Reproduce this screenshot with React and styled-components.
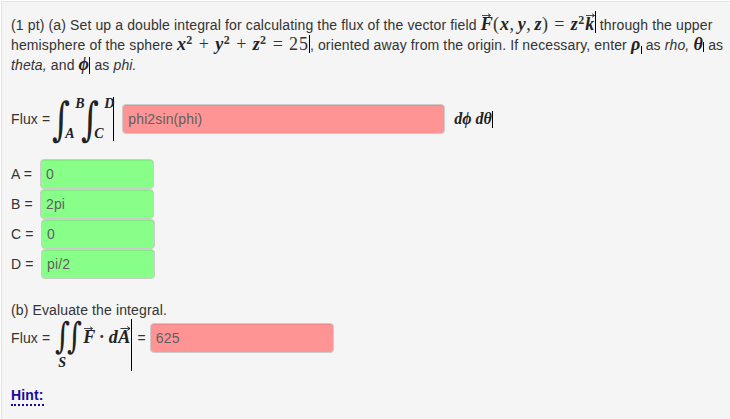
import React from "react";
import styled, { createGlobalStyle } from "styled-components";

const GlobalStyle = createGlobalStyle`
  html, body { margin: 0; padding: 0; background: #fff; }
  body { font-family: "Liberation Sans", Arial, sans-serif; font-size: 14px; line-height: 20px; letter-spacing: 0.13px; color: #333; }
`;

function VectorOver({ children, wide }) {
  return (
    <Vector>
      <VectorArrow $wide={wide} viewBox="0 0 12 6" aria-hidden="true">
        <path d="M0 3 H11 M8 0.6 L11.5 3 L8 5.4" fill="none" stroke="#111" strokeWidth="1" />
      </VectorArrow>
      {children}
    </Vector>
  );
}

function Integral({ upper, lower }) {
  return (
    <IntegralWrap>
      <IntegralSign>∫</IntegralSign>
      <Limits>
        <Limit $indent={10}>{upper}</Limit>
        <Limit $indent={0}>{lower}</Limit>
      </Limits>
    </IntegralWrap>
  );
}

export default function App() {
  return (
    <Page>
      <GlobalStyle />
      <Panel>
        <Paragraph>
          <Line>
            (1 pt) (a) Set up a double integral for calculating the flux of the vector field{" "}
            <Var>
              <VectorOver>F</VectorOver>
            </Var>
            <MathText>(</MathText>
            <Var>x</Var>
            <Comma>,</Comma>
            <Var>y</Var>
            <Comma>,</Comma>
            <Var>z</Var>
            <MathText>) = </MathText>
            <Var>z</Var>
            <Sup>2</Sup>
            <Var>
              <VectorOver>k</VectorOver>
            </Var>
            <Tick $height={22} $drop={3} /> through the upper
          </Line>
          <Line>
            hemisphere of the sphere <Var>x</Var>
            <Sup>2</Sup>
            <MathText> + </MathText>
            <Var>y</Var>
            <Sup>2</Sup>
            <MathText> + </MathText>
            <Var>z</Var>
            <Sup>2</Sup>
            <MathText> = 25</MathText>
            <Tick $height={18} $drop={3} />, oriented away from the origin. If necessary, enter{" "}
            <Var>ρ</Var>
            <Tick $height={8} $drop={4} /> as <em>rho,</em> <Var>θ</Var>
            <Tick $height={10} $drop={2} /> as
          </Line>
          <Line>
            <em>theta,</em> and <Var>ϕ</Var>
            <Tick $height={17} $drop={4} /> as <em>phi.</em>
          </Line>
        </Paragraph>

        <IntegralRow>
          <span>Flux =</span>
          <BarBlock>
            <Integral upper="B" lower="A" />
            <Integral upper="D" lower="C" />
          </BarBlock>
          <AnswerInput $color="red" $width={323} value="phi2sin(phi)" readOnly />
          <Differential>
            <DiffVar>dϕ</DiffVar> <DiffVar>dθ</DiffVar>
            <Tick $height={17} $drop={4} />
          </Differential>
        </IntegralRow>

        <LimitList>
          <LimitRow>
            <LimitLabel $width={29}>A =</LimitLabel>
            <AnswerInput $color="green" $width={114} value="0" readOnly />
          </LimitRow>
          <LimitRow>
            <LimitLabel $width={29}>B =</LimitLabel>
            <AnswerInput $color="green" $width={114} value="2pi" readOnly />
          </LimitRow>
          <LimitRow>
            <LimitLabel $width={30}>C =</LimitLabel>
            <AnswerInput $color="green" $width={114} value="0" readOnly />
          </LimitRow>
          <LimitRow>
            <LimitLabel $width={30}>D =</LimitLabel>
            <AnswerInput $color="green" $width={114} value="pi/2" readOnly />
          </LimitRow>
        </LimitList>

        <PartB>(b) Evaluate the integral.</PartB>
        <SurfaceRow>
          <span>Flux =</span>
          <SurfaceBar>
            <SurfaceIntegral>
              <SurfaceSigns>
                <SurfaceSign>∫</SurfaceSign>
                <SurfaceSign>∫</SurfaceSign>
              </SurfaceSigns>
              <SurfaceLimit>S</SurfaceLimit>
            </SurfaceIntegral>
            <SurfaceBody>
              <Var>
                <VectorOver>F</VectorOver>
              </Var>
              <Dot>·</Dot>
              <Var>d</Var>
              <Var>
                <VectorOver wide>A</VectorOver>
              </Var>
            </SurfaceBody>
          </SurfaceBar>
          <span>=</span>
          <SurfaceInput $color="red" $width={184} value="625" readOnly />
        </SurfaceRow>

        <HintLink href="#hint">Hint:</HintLink>
      </Panel>
    </Page>
  );
}

const Page = styled.div`
  width: 730px;
  height: 419px;
  overflow: hidden;
  padding: 1px 0 0 1px;
  box-sizing: border-box;
`;

const Panel = styled.div`
  height: 100%;
  box-sizing: border-box;
  background: #f5f5f5;
  border: 1px solid #e3e3e3;
  border-right: none;
  border-bottom: none;
  padding: 13px 0 0 9px;
`;

const Paragraph = styled.div`
  display: flex;
  flex-direction: column;
`;

const Line = styled.div`
  height: 20px;
  white-space: nowrap;
`;

const Var = styled.span`
  font-family: "Liberation Serif", serif;
  font-style: italic;
  font-weight: bold;
  font-size: 18px;
  line-height: 14px;
  letter-spacing: 0.4px;
  color: #222;
`;

const DiffVar = styled(Var)`
  font-size: 16px;
  letter-spacing: 0;
`;

const MathText = styled.span`
  font-family: "Liberation Serif", serif;
  font-size: 18px;
  line-height: 14px;
  letter-spacing: 0.9px;
  color: #333;
  white-space: pre;
`;

const Comma = styled(MathText)`
  margin-right: 3px;
`;

const Dot = styled(MathText)`
  margin: 0 4px 0 3px;
  font-weight: bold;
  letter-spacing: 0;
`;

const Sup = styled.sup`
  font-family: "Liberation Serif", serif;
  font-weight: bold;
  font-size: 12px;
  line-height: 0;
  margin-right: 1px;
`;

const Tick = styled.span`
  display: inline-block;
  width: 1px;
  height: ${({ $height }) => $height}px;
  margin-top: -${({ $height }) => $height}px;
  vertical-align: -${({ $drop }) => $drop}px;
  background: #000;
`;

const Vector = styled.span`
  position: relative;
  display: inline-block;
`;

const VectorArrow = styled.svg`
  position: absolute;
  left: ${({ $wide }) => ($wide ? 2 : 1)}px;
  top: -4px;
  width: ${({ $wide }) => ($wide ? 11 : 9)}px;
  height: 5px;
`;

const IntegralRow = styled.div`
  display: flex;
  align-items: center;
  height: 44px;
  margin-top: 22px;
`;

const BarBlock = styled.div`
  display: flex;
  height: 44px;
  margin: 0 8px 0 5px;
  border-right: 1px solid #000;
`;

const IntegralWrap = styled.div`
  display: flex;
  height: 44px;
  width: 29px;
`;

const IntegralSign = styled.span`
  flex: none;
  width: 10px;
  font-family: "DejaVu Serif", serif;
  font-size: 46px;
  line-height: 44px;
  color: #222;
  transform: translateX(-3px) scaleX(0.75);
  transform-origin: left center;
`;

const Limits = styled.div`
  display: flex;
  flex-direction: column;
  justify-content: space-between;
`;

const Limit = styled.span`
  margin-left: ${({ $indent }) => $indent}px;
  font-family: "Liberation Serif", serif;
  font-style: italic;
  font-weight: bold;
  font-size: 14px;
  line-height: 14px;
  color: #222;
`;

const AnswerInput = styled.input`
  box-sizing: border-box;
  width: ${({ $width }) => $width}px;
  height: 30px;
  padding: 4px 5px;
  margin: 0;
  font-family: "Liberation Sans", Arial, sans-serif;
  font-size: 14px;
  letter-spacing: 0.13px;
  color: #5f5f5f;
  border: 1px solid #ccc;
  border-radius: 4px;
  box-shadow: inset 0 1px 1px rgba(0, 0, 0, 0.075);
  background: ${({ $color }) => ($color === "red" ? "#ff9494" : "#88ff88")};
  outline: none;
`;

const Differential = styled.span`
  margin-left: 9px;
`;

const LimitList = styled.div`
  display: flex;
  flex-direction: column;
  margin-top: 18px;
`;

const LimitRow = styled.div`
  display: flex;
  align-items: center;
  height: 30px;
`;

const LimitLabel = styled.span`
  width: ${({ $width }) => $width}px;
  flex: none;
`;

const PartB = styled.div`
  margin-top: 21px;
`;

const SurfaceRow = styled.div`
  display: flex;
  align-items: flex-start;
  margin-top: -1px;
  height: 52px;
  line-height: 38px;
`;

const SurfaceBar = styled.div`
  display: flex;
  height: 52px;
  margin: 0 6px 0 5px;
  border-right: 1px solid #000;
`;

const SurfaceIntegral = styled.div`
  display: flex;
  flex-direction: column;
  align-items: flex-start;
  width: 25px;
`;

const SurfaceSigns = styled.div`
  display: flex;
  height: 37px;
`;

const SurfaceSign = styled.span`
  width: 12px;
  font-family: "DejaVu Serif", serif;
  font-size: 36px;
  line-height: 34px;
  color: #222;
  transform: scaleX(0.8);
  transform-origin: left center;
`;

const SurfaceLimit = styled.span`
  margin-left: 3px;
  font-family: "Liberation Serif", serif;
  font-style: italic;
  font-weight: bold;
  font-size: 14px;
  line-height: 14px;
  color: #222;
`;

const SurfaceBody = styled.div`
  margin-left: 3px;
  white-space: nowrap;
`;

const SurfaceInput = styled(AnswerInput)`
  margin: 4px 0 0 4px;
`;

const HintLink = styled.a`
  display: inline-block;
  margin-top: 16px;
  font-weight: bold;
  color: #1a0a9c;
  text-decoration: none;
  line-height: 17px;
  border-bottom: 2px dotted #1a0a9c;
`;
